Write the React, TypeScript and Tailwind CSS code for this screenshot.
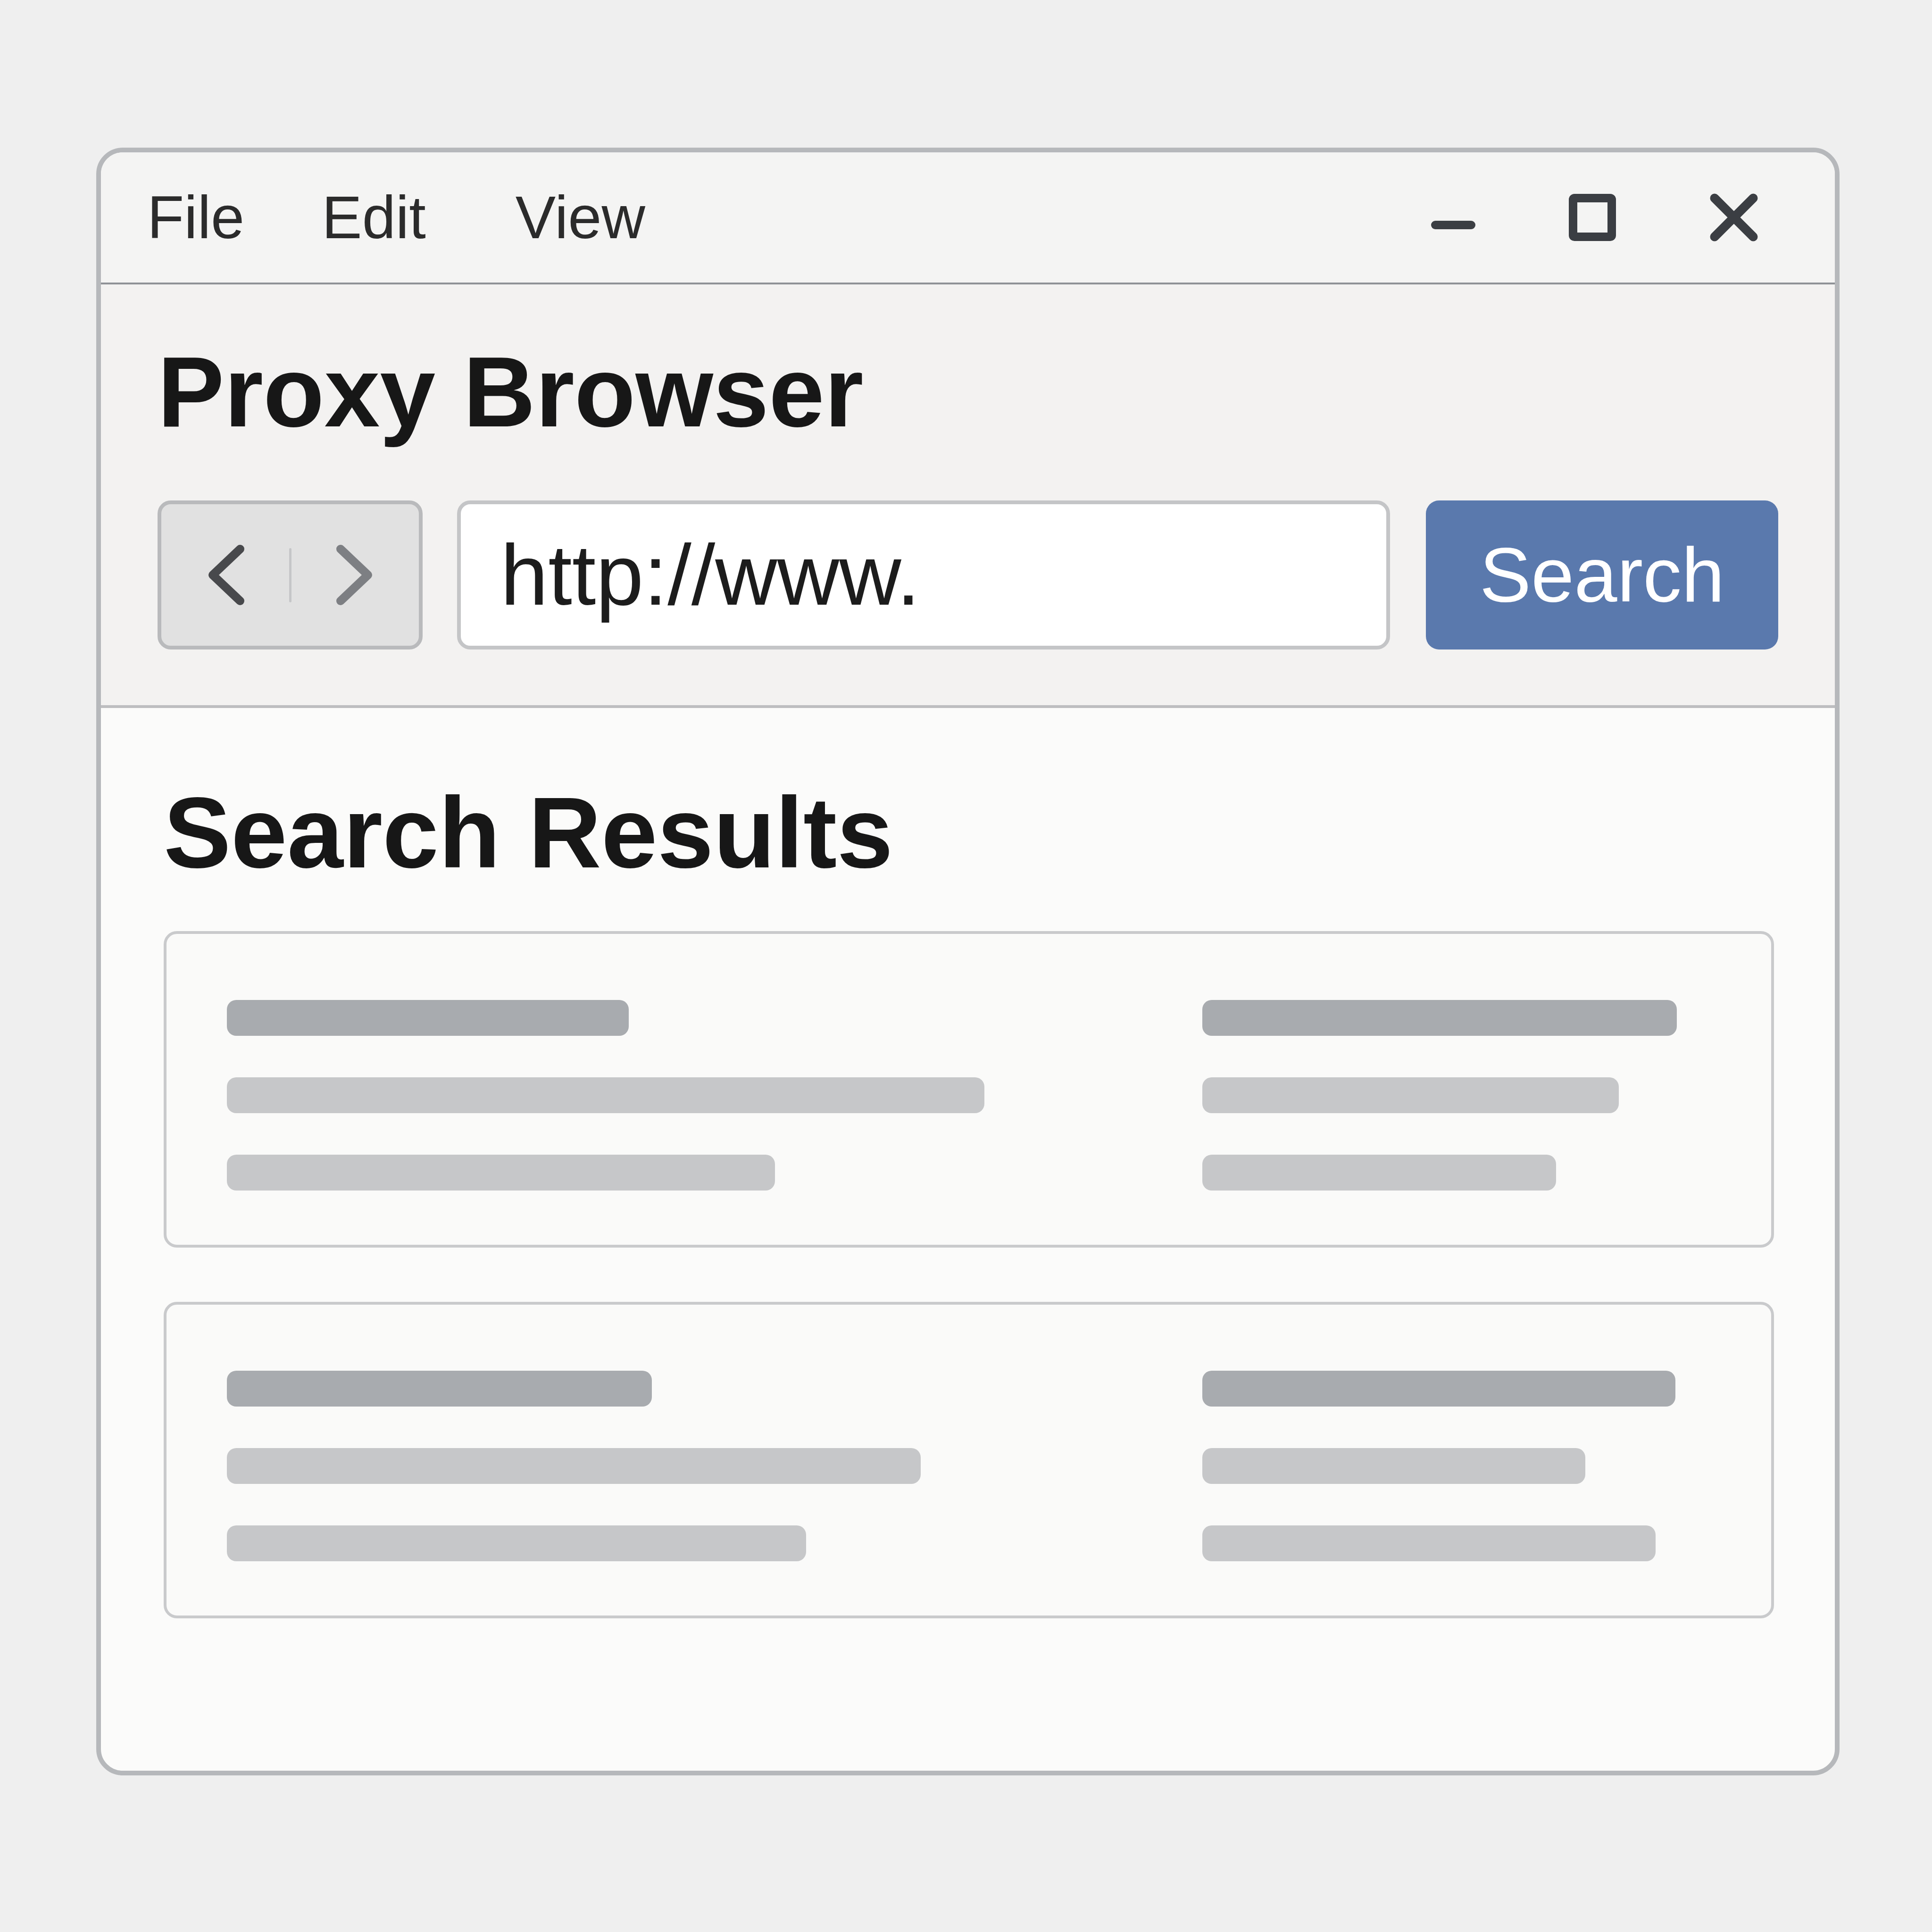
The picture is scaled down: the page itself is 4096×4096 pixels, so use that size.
const LEFT_ROWS = [
  [852, 1606, 1162],
  [901, 1471, 1228],
];

const RIGHT_ROWS = [
  [1006, 883, 750],
  [1003, 812, 961],
];

function Bar({ width, dark }: { width: number; dark: boolean }) {
  return (
    <div
      className={dark ? 'h-[76px] rounded-[20px] bg-[#a8abaf]' : 'h-[76px] rounded-[20px] bg-[#c6c7c9]'}
      style={{ width }}
    />
  );
}

function ResultCard({ left, right }: { left: number[]; right: number[] }) {
  return (
    <div className="flex h-[671px] rounded-[28px] border-[6px] border-[#c9cacc] bg-[#fafaf9] pl-[128px] pt-[140px]">
      <div className="flex w-[2068px] flex-col gap-[88px]">
        {left.map((w, i) => (
          <Bar key={i} width={w} dark={i === 0} />
        ))}
      </div>
      <div className="flex flex-col gap-[88px]">
        {right.map((w, i) => (
          <Bar key={i} width={w} dark={i === 0} />
        ))}
      </div>
    </div>
  );
}

export default function App() {
  return (
    <div className="h-[4096px] w-[4096px] bg-[#efefef] pl-[204px] pt-[313px] font-['Liberation_Sans',Arial,sans-serif]">
      <div className="flex h-[3451px] w-[3696px] flex-col overflow-hidden rounded-[56px] border-[10px] border-[#b6b8bb] bg-[#fbfbfa]">
        {/* Menu bar */}
        <div className="flex h-[280px] items-center border-b-[4px] border-[#8f9297] bg-[#f4f4f3] pl-[98px] pr-[162px]">
          <span className="text-[128px] leading-none text-[#2b2b2b]">File</span>
          <span className="ml-[164px] text-[128px] leading-none text-[#2b2b2b]">Edit</span>
          <span className="ml-[190px] text-[128px] leading-none text-[#2b2b2b]">View</span>
          <div className="ml-auto flex items-center gap-[198px]">
            <svg width="94" height="100" viewBox="0 0 94 100">
              <line x1="9" y1="66" x2="85" y2="66" stroke="#3b3e43" strokeWidth="18" strokeLinecap="round" />
            </svg>
            <svg width="100" height="100" viewBox="0 0 100 100">
              <rect x="9" y="9" width="82" height="82" rx="3" fill="none" stroke="#3b3e43" strokeWidth="18" />
            </svg>
            <svg width="104" height="104" viewBox="0 0 104 104">
              <path d="M11 11 L93 93 M93 11 L11 93" stroke="#3b3e43" strokeWidth="19" strokeLinecap="round" />
            </svg>
          </div>
        </div>

        {/* Header */}
        <div className="flex flex-col border-b-[6px] border-[#bdbec0] bg-[#f3f2f1] px-[120px] pb-[118px] pt-[122px]">
          <h1 className="text-[212px] font-bold leading-none text-[#171717]">Proxy Browser</h1>
          <div className="mt-[124px] flex h-[316px] items-stretch">
            <div className="flex w-[562px] items-center justify-center gap-[90px] rounded-[28px] border-[8px] border-[#b9babc] bg-[#e1e1e1]">
              <svg width="86" height="130" viewBox="0 0 86 130">
                <path d="M72 10 L14 65 L72 120" fill="none" stroke="#48494c" strokeWidth="18" strokeLinecap="round" strokeLinejoin="round" />
              </svg>
              <div className="h-[115px] w-[5px] rounded-full bg-[#c5c6c8]" />
              <svg width="86" height="130" viewBox="0 0 86 130">
                <path d="M14 10 L72 65 L14 120" fill="none" stroke="#7d7f83" strokeWidth="18" strokeLinecap="round" strokeLinejoin="round" />
              </svg>
            </div>
            <div className="ml-[73px] flex flex-1 items-center rounded-[28px] border-[8px] border-[#c4c5c7] bg-white pl-[84px]">
              <span className="text-[182px] leading-none text-[#1c1c1c]">http://www.</span>
            </div>
            <button className="ml-[76px] flex w-[747px] items-center justify-center rounded-[28px] bg-[#5a79ad] text-[164px] leading-none text-white">
              Search
            </button>
          </div>
        </div>

        {/* Results */}
        <div className="flex flex-col pl-[133px] pr-[129px] pt-[157px]">
          <h2 className="text-[214px] font-bold leading-none text-[#171717]">Search Results</h2>
          <div className="mt-[102px] flex flex-col gap-[115px]">
            {LEFT_ROWS.map((left, i) => (
              <ResultCard key={i} left={left} right={RIGHT_ROWS[i]} />
            ))}
          </div>
        </div>
      </div>
    </div>
  );
}
